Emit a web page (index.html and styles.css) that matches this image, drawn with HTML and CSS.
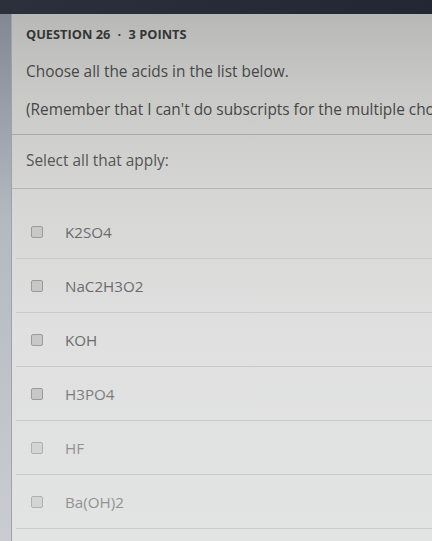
FILE: index.html
```html
<!DOCTYPE html>
<html lang="en">
  <head>
    <meta charset="UTF-8" />
    <title>Question 26</title>
    <link rel="stylesheet" href="styles.css">
  </head>
  <body>
    <div class="topbar"></div>
    <div class="page">
      <div class="card">
        <div class="q-header">
          <h3 class="q-title">Question 26 <span class="dot">&middot;</span> 3 Points</h3>
          <p class="q-text">Choose all the acids in the list below.</p>
          <p class="q-text">(Remember that I can't do subscripts for the multiple choice answers.)</p>
        </div>
        <div class="q-instr">Select all that apply:</div>
        <ul class="answers">
          <li class="answer"><span class="box"></span><span class="label">K2SO4</span></li>
          <li class="answer"><span class="box"></span><span class="label">NaC2H3O2</span></li>
          <li class="answer"><span class="box"></span><span class="label">KOH</span></li>
          <li class="answer"><span class="box"></span><span class="label">H3PO4</span></li>
          <li class="answer"><span class="box"></span><span class="label">HF</span></li>
          <li class="answer"><span class="box"></span><span class="label">Ba(OH)2</span></li>
        </ul>
      </div>
    </div>
  </body>
</html>
```

FILE: styles.css
```css
body {
  margin: 0;
  height: 541px;
  overflow: hidden;
  font-family: "Open Sans", sans-serif;
  background: linear-gradient(180deg, #7f848f 0%, #b4b9c0 40%, #c9cdd1 100%);
}
.topbar {
  height: 14px;
  background: linear-gradient(90deg, #2c303c, #232734);
}
.page {
  padding-left: 11px;
}
.card {
  min-height: 527px;
  border-left: 1px solid #9fa2a6;
  background: linear-gradient(180deg, #b8b9b7 0%, #c9cac8 15%, #d6d7d5 35%, #dfe0df 60%, #e2e4e3 100%);
  white-space: nowrap;
  overflow: hidden;
}
.q-header {
  padding: 12px 0 14px 14px;
  border-bottom: 1px solid #a9abab;
}
.q-title {
  margin: 0;
  font-size: 12.8px;
  font-weight: 700;
  text-transform: uppercase;
  color: #363636;
  line-height: 17px;
}
.dot {
  margin: 0 4px;
}
.q-text {
  margin: 0;
  padding-top: 19px;
  font-size: 15.4px;
  line-height: 20px;
  color: #474747;
}
.q-text + .q-text {
  padding-top: 18px;
}
.q-instr {
  padding: 15px 0 16px 14px;
  font-size: 15.4px;
  line-height: 22px;
  color: #555;
  border-bottom: 1px solid #b4b6b5;
}
.answers {
  list-style: none;
  margin: 0;
  padding: 16px 0 0 4px;
}
.answer {
  display: flex;
  align-items: center;
  height: 53px;
  border-bottom: 1px solid #c9cbca;
  padding-left: 15px;
}
.box {
  width: 10px;
  height: 10px;
  border: 1px solid #9a9a9a;
  border-radius: 2px;
  background: #c8c8c8;
}
.label {
  margin-left: 22px;
  font-size: 15.2px;
  color: #6c6c6c;
}
.answer:nth-child(n+4) .label { color: #7d7d7d; }
.answer:nth-child(n+5) .label { color: #929292; }
.answer:nth-child(n+5) .box { border-color: #b0b0b0; background: #d4d4d4; }
```
